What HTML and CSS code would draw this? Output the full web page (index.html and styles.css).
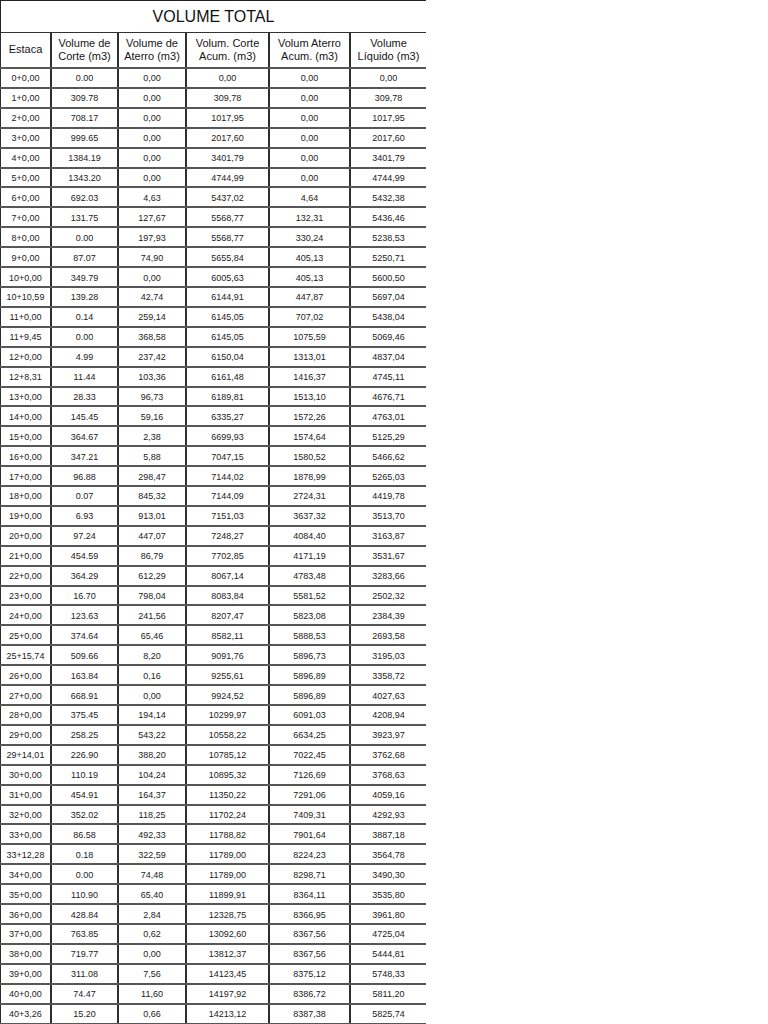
FILE: index.html
```html
<!DOCTYPE html>
<html lang="pt">
<head>
<meta charset="utf-8">
<title>Volume Total</title>
<link rel="stylesheet" href="styles.css">
</head>
<body>
<div class="sheet">
  <div class="title">VOLUME TOTAL</div>
  <div class="row head">
    <div class="cell">Estaca</div>
    <div class="cell">Volume de<br>Corte (m3)</div>
    <div class="cell">Volume de<br>Aterro (m3)</div>
    <div class="cell">Volum. Corte<br>Acum. (m3)</div>
    <div class="cell">Volum Aterro<br>Acum. (m3)</div>
    <div class="cell">Volume<br>Líquido (m3)</div>
  </div>
  <div id="body"></div>
</div>
<script src="script.js"></script>
</body>
</html>
```

FILE: styles.css
```css
html, body {
  margin: 0;
  padding: 0;
  background: #ffffff;
}
body {
  font-family: "Liberation Sans", Arial, sans-serif;
  color: #1a1a1a;
}
.sheet {
  width: 426px;
}
.title {
  box-sizing: border-box;
  height: 33px;
  border-top: 1px solid #222;
  border-left: 1px solid #222;
  border-bottom: 1px solid #333;
  display: flex;
  align-items: center;
  justify-content: center;
  font-size: 16px;
  color: #111;
  padding-top: 1px;
}
.row {
  box-sizing: border-box;
  display: grid;
  grid-template-columns: 50px 67px 68px 83px 81px 77px;
  height: 19.92px;
  border-bottom: 2px solid #575757;
}
.row.head {
  height: 36px;
}
.cell {
  box-sizing: border-box;
  border-left: 2px solid #2e2e2e;
  display: flex;
  align-items: center;
  justify-content: center;
  text-align: center;
  font-size: 9px;
  color: #222;
  white-space: nowrap;
  padding-top: 1px;
}
.cell:first-child {
  border-left-width: 1px;
}
.head .cell {
  font-size: 11px;
  line-height: 13.5px;
  color: #151515;
  padding-top: 0;
}
```

FILE: script.js
```js
const data = [
["0+0,00","0.00","0,00","0,00","0,00","0,00"],
["1+0,00","309.78","0,00","309,78","0,00","309,78"],
["2+0,00","708.17","0,00","1017,95","0,00","1017,95"],
["3+0,00","999.65","0,00","2017,60","0,00","2017,60"],
["4+0,00","1384.19","0,00","3401,79","0,00","3401,79"],
["5+0,00","1343.20","0,00","4744,99","0,00","4744,99"],
["6+0,00","692.03","4,63","5437,02","4,64","5432,38"],
["7+0,00","131.75","127,67","5568,77","132,31","5436,46"],
["8+0,00","0.00","197,93","5568,77","330,24","5238,53"],
["9+0,00","87.07","74,90","5655,84","405,13","5250,71"],
["10+0,00","349.79","0,00","6005,63","405,13","5600,50"],
["10+10,59","139.28","42,74","6144,91","447,87","5697,04"],
["11+0,00","0.14","259,14","6145,05","707,02","5438,04"],
["11+9,45","0.00","368,58","6145,05","1075,59","5069,46"],
["12+0,00","4.99","237,42","6150,04","1313,01","4837,04"],
["12+8,31","11.44","103,36","6161,48","1416,37","4745,11"],
["13+0,00","28.33","96,73","6189,81","1513,10","4676,71"],
["14+0,00","145.45","59,16","6335,27","1572,26","4763,01"],
["15+0,00","364.67","2,38","6699,93","1574,64","5125,29"],
["16+0,00","347.21","5,88","7047,15","1580,52","5466,62"],
["17+0,00","96.88","298,47","7144,02","1878,99","5265,03"],
["18+0,00","0.07","845,32","7144,09","2724,31","4419,78"],
["19+0,00","6.93","913,01","7151,03","3637,32","3513,70"],
["20+0,00","97.24","447,07","7248,27","4084,40","3163,87"],
["21+0,00","454.59","86,79","7702,85","4171,19","3531,67"],
["22+0,00","364.29","612,29","8067,14","4783,48","3283,66"],
["23+0,00","16.70","798,04","8083,84","5581,52","2502,32"],
["24+0,00","123.63","241,56","8207,47","5823,08","2384,39"],
["25+0,00","374.64","65,46","8582,11","5888,53","2693,58"],
["25+15,74","509.66","8,20","9091,76","5896,73","3195,03"],
["26+0,00","163.84","0,16","9255,61","5896,89","3358,72"],
["27+0,00","668.91","0,00","9924,52","5896,89","4027,63"],
["28+0,00","375.45","194,14","10299,97","6091,03","4208,94"],
["29+0,00","258.25","543,22","10558,22","6634,25","3923,97"],
["29+14,01","226.90","388,20","10785,12","7022,45","3762,68"],
["30+0,00","110.19","104,24","10895,32","7126,69","3768,63"],
["31+0,00","454.91","164,37","11350,22","7291,06","4059,16"],
["32+0,00","352.02","118,25","11702,24","7409,31","4292,93"],
["33+0,00","86.58","492,33","11788,82","7901,64","3887,18"],
["33+12,28","0.18","322,59","11789,00","8224,23","3564,78"],
["34+0,00","0.00","74,48","11789,00","8298,71","3490,30"],
["35+0,00","110.90","65,40","11899,91","8364,11","3535,80"],
["36+0,00","428.84","2,84","12328,75","8366,95","3961,80"],
["37+0,00","763.85","0,62","13092,60","8367,56","4725,04"],
["38+0,00","719.77","0,00","13812,37","8367,56","5444,81"],
["39+0,00","311.08","7,56","14123,45","8375,12","5748,33"],
["40+0,00","74.47","11,60","14197,92","8386,72","5811,20"],
["40+3,26","15.20","0,66","14213,12","8387,38","5825,74"]
];
const body = document.getElementById("body");
for (const r of data) {
  const row = document.createElement("div");
  row.className = "row";
  for (const v of r) {
    const c = document.createElement("div");
    c.className = "cell";
    c.textContent = v;
    row.appendChild(c);
  }
  body.appendChild(row);
}
```
